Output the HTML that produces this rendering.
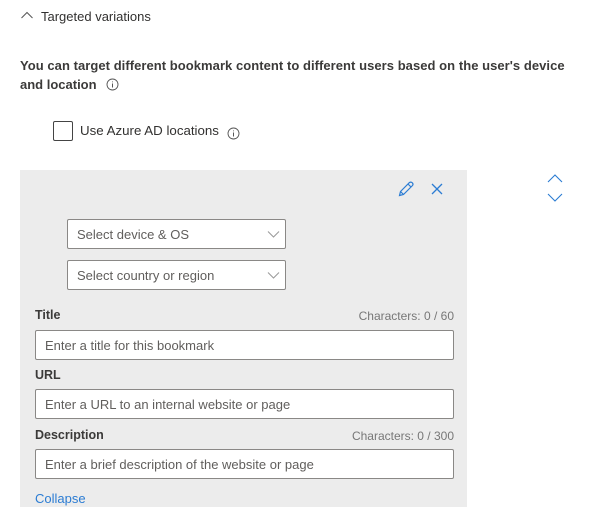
<!DOCTYPE html>
<html><head><style>
*{margin:0;padding:0;box-sizing:border-box}
body{width:600px;height:507px;background:#fff;font-family:"Liberation Sans",sans-serif;color:#323130;position:relative;overflow:hidden;font-size:13px}
.a{position:absolute;white-space:nowrap}
.panel{position:absolute;left:20px;top:170px;width:447px;height:337px;background:#ececec}
.box{position:absolute;background:#fff;border:1px solid #8a8886;border-radius:2px;height:30px;font-size:13px;color:#605e5c;padding-left:9px;line-height:29px}
.lbl{font-weight:bold;font-size:12.5px;color:#3b3a39}
.cnt{font-size:12px;color:#777}
</style></head><body>
<svg class="a" style="left:20px;top:10px" width="14" height="10" viewBox="0 0 14 10"><path d="M1.5 8 L7 2.5 L12.5 8" fill="none" stroke="#555" stroke-width="1"/></svg>
<div class="a" style="left:41px;top:9px;font-size:13px;color:#323130">Targeted variations</div>
<div class="a" style="left:20px;top:58px;font-size:13px;font-weight:bold;color:#3b3a39;letter-spacing:0.05px">You can target different bookmark content to different users based on the user's device</div>
<div class="a" style="left:20px;top:77px;font-size:13px;font-weight:bold;color:#3b3a39">and location</div>
<svg class="a" style="left:106px;top:78px" width="13" height="13" viewBox="0 0 13 13"><circle cx="6.5" cy="6.5" r="5.5" fill="none" stroke="#555" stroke-width="0.9"/><path d="M6.5 5.5v4M6.5 3.5v.8" stroke="#555" stroke-width="1"/></svg>
<div class="a" style="left:53px;top:121px;width:20px;height:20px;border:1px solid #444;border-radius:2px;background:#fff"></div>
<div class="a" style="left:80px;top:123px;font-size:13.3px">Use Azure AD locations</div>
<svg class="a" style="left:227px;top:127px" width="13" height="13" viewBox="0 0 13 13"><circle cx="6.5" cy="6.5" r="5.5" fill="none" stroke="#555" stroke-width="0.9"/><path d="M6.5 5.5v4M6.5 3.5v.8" stroke="#555" stroke-width="1"/></svg>
<div class="panel"></div>
<svg class="a" style="left:397px;top:180px" width="18" height="18" viewBox="0 0 18 18"><path d="M2.5 15.5 L3.5 11.5 L12.5 2.5 Q14 1.5 15.5 3 Q16.5 4.5 15.5 5.5 L6.5 14.5 Z M11 4 L14 7 M3.5 11.5 L6.5 14.5" fill="none" stroke="#2b7cd3" stroke-width="1.2"/></svg>
<svg class="a" style="left:430px;top:182px" width="14" height="14" viewBox="0 0 14 14"><path d="M2 2L12 12M12 2L2 12" stroke="#2b7cd3" stroke-width="1.3"/></svg>
<svg class="a" style="left:546px;top:172px" width="18" height="34" viewBox="0 0 18 34"><path d="M2 10 L9 3 L16 10 M2 22 L9 29 L16 22" fill="none" stroke="#2b7cd3" stroke-width="1.1"/></svg>
<div class="box" style="left:67px;top:219px;width:219px">Select device &amp; OS</div>
<svg class="a" style="left:267px;top:230px" width="13" height="8" viewBox="0 0 13 8"><path d="M1 1.5 L6.5 7 L12 1.5" fill="none" stroke="#999" stroke-width="1"/></svg>
<div class="box" style="left:67px;top:260px;width:219px">Select country or region</div>
<svg class="a" style="left:267px;top:271px" width="13" height="8" viewBox="0 0 13 8"><path d="M1 1.5 L6.5 7 L12 1.5" fill="none" stroke="#999" stroke-width="1"/></svg>
<div class="a lbl" style="left:35px;top:308px">Title</div>
<div class="a cnt" style="right:146px;top:309px">Characters: 0 / 60</div>
<div class="box" style="left:35px;top:330px;width:419px">Enter a title for this bookmark</div>
<div class="a lbl" style="left:35px;top:368px">URL</div>
<div class="box" style="left:35px;top:389px;width:419px">Enter a URL to an internal website or page</div>
<div class="a lbl" style="left:35px;top:428px">Description</div>
<div class="a cnt" style="right:146px;top:429px">Characters: 0 / 300</div>
<div class="box" style="left:35px;top:449px;width:419px">Enter a brief description of the website or page</div>
<div class="a" style="left:35px;top:491px;color:#2b7cd3;font-size:13px">Collapse</div>
</body></html>
